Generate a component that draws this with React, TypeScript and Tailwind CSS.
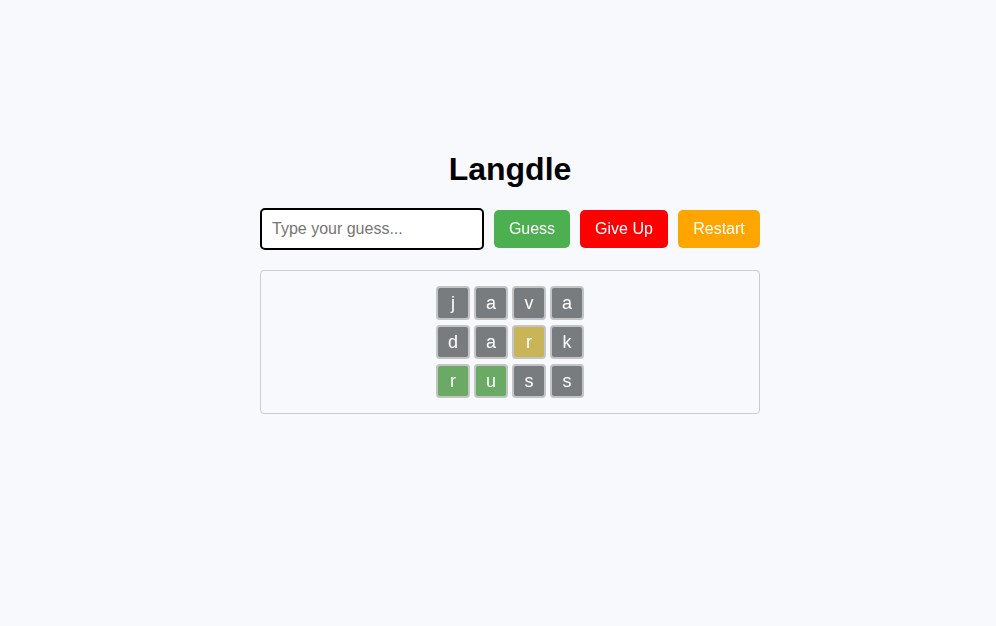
import { useState } from "react";

type Tile = { letter: string; state: "absent" | "present" | "correct" };

const rows: Tile[][] = [
  [
    { letter: "j", state: "absent" },
    { letter: "a", state: "absent" },
    { letter: "v", state: "absent" },
    { letter: "a", state: "absent" },
  ],
  [
    { letter: "d", state: "absent" },
    { letter: "a", state: "absent" },
    { letter: "r", state: "present" },
    { letter: "k", state: "absent" },
  ],
  [
    { letter: "r", state: "correct" },
    { letter: "u", state: "correct" },
    { letter: "s", state: "absent" },
    { letter: "s", state: "absent" },
  ],
];

const tileColor = {
  absent: "bg-[#787c7e]",
  present: "bg-[#c9b458]",
  correct: "bg-[#6aaa64]",
};

export default function App() {
  const [guess, setGuess] = useState("");

  return (
    <div className="min-h-screen bg-[#f8f9fc] font-['Liberation_Sans',Arial,sans-serif] text-black">
      <div className="flex flex-col items-center pl-[24px] pt-[151px]">
        <h1 className="text-[32px] font-bold leading-[37px]">Langdle</h1>

        {/* guess input + controls */}
        <div className="mt-5 flex w-[500px] items-center gap-[10px]">
          <input
            autoFocus
            value={guess}
            onChange={(e) => setGuess(e.target.value)}
            placeholder="Type your guess..."
            className="h-[42px] w-[224px] rounded-[5px] border-2 border-black bg-white px-[10px] text-[16px] caret-black outline-none placeholder:text-[#757575]"
          />
          <button className="h-[38px] w-[76px] rounded-[5px] bg-[#4caf50] text-[16px] text-white">
            Guess
          </button>
          <button className="h-[38px] w-[88px] rounded-[5px] bg-[#ff0000] text-[16px] text-white">
            Give Up
          </button>
          <button className="h-[38px] w-[82px] rounded-[5px] bg-[#ffa500] text-[16px] text-white">
            Restart
          </button>
        </div>

        {/* board */}
        <div className="mt-5 flex w-[500px] flex-col items-center gap-[5px] rounded-[4px] border border-[#cccccc] py-[15px]">
          {rows.map((row, i) => (
            <div key={i} className="flex gap-1">
              {row.map((t, j) => (
                <div
                  key={j}
                  className={`flex h-[34px] w-[34px] items-center justify-center rounded-[4px] border-2 border-[#c4c4c4] text-[18px] text-white ${tileColor[t.state]}`}
                >
                  {t.letter}
                </div>
              ))}
            </div>
          ))}
        </div>
      </div>
    </div>
  );
}
